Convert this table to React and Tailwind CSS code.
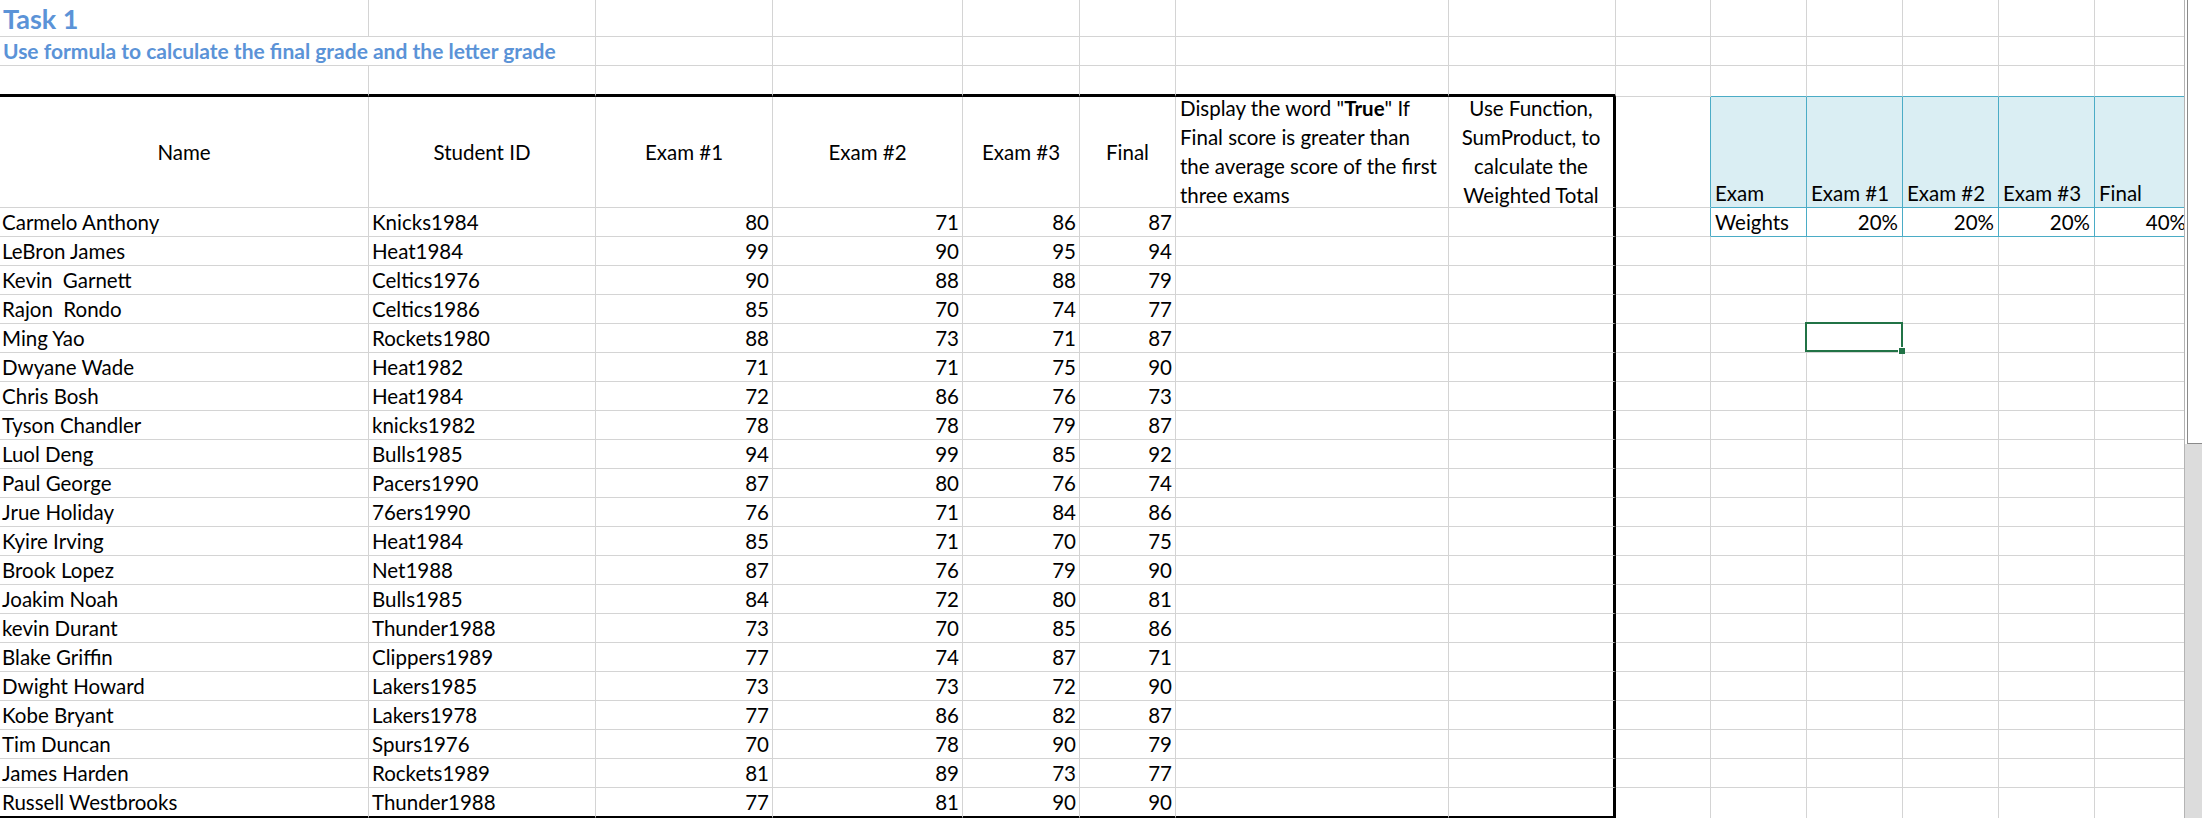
import React from 'react'

// column widths A..N, spreadsheet at ~145% zoom
const COLS = [
  'w-[369px]', 'w-[227px]', 'w-[177px]', 'w-[190px]', 'w-[117px]', 'w-[96px]', 'w-[273px]',
  'w-[167px]', 'w-[95px]', 'w-[96px]', 'w-[96px]', 'w-[96px]', 'w-[96px]', 'w-[96px]',
]

const GRID_R = 'border-r border-r-[#d4d4d4]'
const GRID_B = 'border-b border-b-[#d4d4d4]'
const THICK_R = 'border-r-[3px] border-r-black'
const THICK_B = 'border-b-[3px] border-b-black'
const BLUE_R = 'border-r border-r-[#4bacc6]'
const BLUE_B = 'border-b border-b-[#4bacc6]'

const students = [
  ['Carmelo Anthony', 'Knicks1984', 80, 71, 86, 87],
  ['LeBron James', 'Heat1984', 99, 90, 95, 94],
  ['Kevin  Garnett', 'Celtics1976', 90, 88, 88, 79],
  ['Rajon  Rondo', 'Celtics1986', 85, 70, 74, 77],
  ['Ming Yao', 'Rockets1980', 88, 73, 71, 87],
  ['Dwyane Wade', 'Heat1982', 71, 71, 75, 90],
  ['Chris Bosh', 'Heat1984', 72, 86, 76, 73],
  ['Tyson Chandler', 'knicks1982', 78, 78, 79, 87],
  ['Luol Deng', 'Bulls1985', 94, 99, 85, 92],
  ['Paul George', 'Pacers1990', 87, 80, 76, 74],
  ['Jrue Holiday', '76ers1990', 76, 71, 84, 86],
  ['Kyire Irving', 'Heat1984', 85, 71, 70, 75],
  ['Brook Lopez', 'Net1988', 87, 76, 79, 90],
  ['Joakim Noah', 'Bulls1985', 84, 72, 80, 81],
  ['kevin Durant', 'Thunder1988', 73, 70, 85, 86],
  ['Blake Griffin', 'Clippers1989', 77, 74, 87, 71],
  ['Dwight Howard', 'Lakers1985', 73, 73, 72, 90],
  ['Kobe Bryant', 'Lakers1978', 77, 86, 82, 87],
  ['Tim Duncan', 'Spurs1976', 70, 78, 90, 79],
  ['James Harden', 'Rockets1989', 81, 89, 73, 77],
  ['Russell Westbrooks', 'Thunder1988', 77, 81, 90, 90],
]

const weights = ['Weights', '20%', '20%', '20%', '40%']
const weightHeads = ['Exam', 'Exam #1', 'Exam #2', 'Exam #3', 'Final']

function Cell({ w, r = GRID_R, b = GRID_B, className = '', children }) {
  return <div className={`${w} shrink-0 flex ${r} ${b} ${className}`}>{children}</div>
}

const Txt = ({ children, className = '' }) => (
  <span className={`whitespace-pre leading-[28px] ${className}`}>{children}</span>
)

function SelectedBox() {
  return (
    <div className="absolute -left-[2px] -top-[2px] -right-[1px] bottom-0 border-2 border-[#217346]">
      <div className="absolute -right-[4px] -bottom-[4px] w-[7px] h-[7px] bg-[#217346] border-t border-l border-white" />
    </div>
  )
}

function DataRow({ row, index, last }) {
  const [name, id, e1, e2, e3, fin] = row
  const b = last ? THICK_B : GRID_B
  const h = last ? 'h-[31px]' : 'h-[29px]'
  return (
    <div className={`flex ${h}`}>
      <Cell w={COLS[0]} b={b} className="items-end pl-[2px]"><Txt>{name}</Txt></Cell>
      <Cell w={COLS[1]} b={b} className="items-end pl-[3px]"><Txt>{id}</Txt></Cell>
      {[e1, e2, e3, fin].map((n, i) => (
        <Cell key={i} w={COLS[2 + i]} b={b} className="items-end justify-end pr-[3px]"><Txt>{n}</Txt></Cell>
      ))}
      <Cell w={COLS[6]} b={b} />
      <Cell w={COLS[7]} b={b} r={THICK_R} />
      <Cell w={COLS[8]} r={index === 0 ? BLUE_R : GRID_R} />
      {index === 0
        ? weights.map((t, i) => (
            <Cell key={i} w={COLS[9 + i]} r={BLUE_R} b={BLUE_B}
              className={`items-end ${i === 0 ? 'pl-[4px]' : 'justify-end pr-[4px]'}`}>
              <Txt>{t}</Txt>
            </Cell>
          ))
        : [0, 1, 2, 3, 4].map((i) => (
            <Cell key={i} w={COLS[9 + i]} className={index === 4 && i === 1 ? 'relative' : ''}>
              {index === 4 && i === 1 && <SelectedBox />}
            </Cell>
          ))}
    </div>
  )
}

function EmptyCells({ from, to, b = GRID_B }) {
  const out = []
  for (let i = from; i <= to; i++) out.push(<Cell key={i} w={COLS[i]} b={b} />)
  return out
}

export default function App() {
  return (
    <div className="flex h-[818px] w-[2202px] overflow-hidden bg-white text-black text-[20.5px] font-['Lato','Liberation_Sans',sans-serif]">
      <div className="w-[2184px] shrink-0 overflow-hidden">
        {/* row 1 */}
        <div className="flex h-[37px]">
          <Cell w={COLS[0]} className="items-end pl-[3px] pb-[2px]">
            <span className="whitespace-pre text-[27px] leading-[31px] font-bold text-[#5b93d7]">Task 1</span>
          </Cell>
          <EmptyCells from={1} to={13} />
        </div>
        {/* row 2 */}
        <div className="flex h-[29px]">
          <Cell w="w-[596px]" className="items-end pl-[3px]">
            <Txt className="font-bold text-[21px] text-[#5b93d7]">Use formula to calculate the final grade and the letter grade</Txt>
          </Cell>
          <EmptyCells from={2} to={13} />
        </div>
        {/* row 3 */}
        <div className="flex h-[31px]">
          <EmptyCells from={0} to={7} b={THICK_B} />
          <Cell w={COLS[8]} />
          {[9, 10, 11, 12, 13].map((i) => <Cell key={i} w={COLS[i]} b={BLUE_B} />)}
        </div>
        {/* header row */}
        <div className="flex h-[111px]">
          {['Name', 'Student ID', 'Exam #1', 'Exam #2', 'Exam #3', 'Final'].map((t, i) => (
            <Cell key={t} w={COLS[i]} className="items-center justify-center">
              <span className="whitespace-pre">{t}</span>
            </Cell>
          ))}
          <Cell w={COLS[6]} className="items-end pl-[4px]">
            <div className="whitespace-nowrap leading-[29px] -mb-[3px]">
              Display the word "<b>True</b>" If<br />
              Final score is greater than<br />
              the average score of the first<br />
              three exams
            </div>
          </Cell>
          <Cell w={COLS[7]} r={THICK_R} className="items-end justify-center">
            <div className="whitespace-nowrap leading-[29px] -mb-[3px] text-center">
              Use Function,<br />
              SumProduct, to<br />
              calculate the<br />
              Weighted Total
            </div>
          </Cell>
          <Cell w={COLS[8]} r={BLUE_R} />
          {weightHeads.map((t, i) => (
            <Cell key={t} w={COLS[9 + i]} r={BLUE_R} b={BLUE_B} className="items-end pl-[4px] bg-[#daeef3]">
              <Txt>{t}</Txt>
            </Cell>
          ))}
        </div>
        {students.map((s, i) => (
          <DataRow key={s[0]} row={s} index={i} last={i === students.length - 1} />
        ))}
      </div>
      {/* vertical scrollbar */}
      <div className="w-[18px] shrink-0 flex flex-col border-l border-[#b4b4b4]">
        <div className="h-[444px] pl-[2px] bg-white">
          <div className="h-full border-l border-b border-[#8a8a8a] bg-white" />
        </div>
        <div className="flex-1 bg-[#dcdcdc]" />
      </div>
    </div>
  )
}
